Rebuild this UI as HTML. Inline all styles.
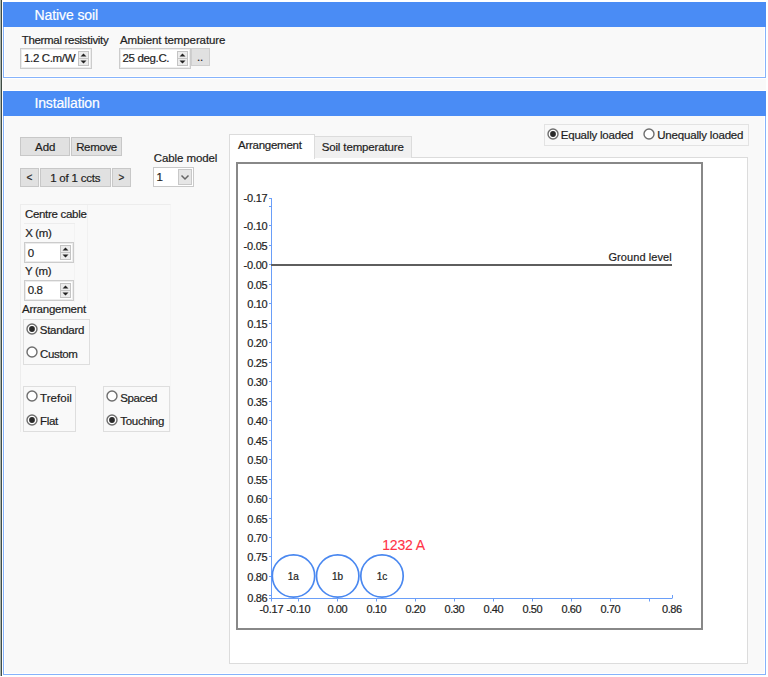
<!DOCTYPE html>
<html><head><meta charset="utf-8"><style>
html,body{margin:0;padding:0;}
body{width:768px;height:677px;position:relative;overflow:hidden;background:#ffffff;font-family:"Liberation Sans",sans-serif;}
body>div,body>svg{position:absolute;}
.t{white-space:nowrap;line-height:1;-webkit-text-stroke:0.2px currentColor;}
</style></head><body>
<div style="left:0px;top:0px;width:1px;height:676px;background:#a9b4ad"></div>
<div style="left:1px;top:0px;width:1px;height:676px;background:#3f4b45"></div>
<div style="left:3px;top:2px;width:763px;height:25px;background:#4a8cf5"></div>
<div style="left:3px;top:27px;width:763px;height:51px;background:#f9f9f9;border:1px solid #86b3fb;border-top:0;box-shadow:inset 1px 0 0 #fff,inset -1px 0 0 #fff,inset 0 -1px 0 #fff;box-sizing:border-box"></div>
<div style="left:3px;top:79px;width:763px;height:11px;background:#f9f9f9"></div>
<div class="t" style="left:34.60px;top:8.00px;font-size:14px;letter-spacing:-0.107px;color:#ffffff;">Native soil</div>
<div style="left:3px;top:91px;width:763px;height:25px;background:#4a8cf5"></div>
<div style="left:3px;top:116px;width:763px;height:559px;background:#f9f9f9;border:1px solid #86b3fb;border-top:0;box-shadow:inset 1px 0 0 #fff,inset -1px 0 0 #fff,inset 0 -1px 0 #fff;box-sizing:border-box"></div>
<div class="t" style="left:34.40px;top:96.00px;font-size:14px;letter-spacing:-0.140px;color:#ffffff;">Installation</div>
<div class="t" style="left:21.70px;top:35.00px;font-size:11.5px;letter-spacing:-0.311px;color:#1e1e1e;">Thermal resistivity</div>
<div style="left:20px;top:48px;width:72px;height:21px;background:#fff;border:1px solid #cccccc;box-shadow:inset 0 0 0 1px #ececec;box-sizing:border-box"></div>
<div style="left:78px;top:51px;width:11px;height:15px;background:#ececec;border:1px solid #c4c4c4;box-sizing:border-box"></div>
<div style="left:78px;top:58px;width:11px;height:1px;background:#c4c4c4"></div>
<svg style="left:78px;top:51px" width="11" height="15"><path d="M2.5 5.5L5.5 2.5L8.5 5.5Z M2.5 9.5L5.5 12.5L8.5 9.5Z" fill="#222"/></svg>
<div class="t" style="left:24.00px;top:53.00px;font-size:11.5px;letter-spacing:-0.350px;color:#1e1e1e;">1.2 C.m/W</div>
<div class="t" style="left:120.00px;top:35.00px;font-size:11.5px;letter-spacing:-0.111px;color:#1e1e1e;">Ambient temperature</div>
<div style="left:119px;top:48px;width:72px;height:21px;background:#fff;border:1px solid #cccccc;box-shadow:inset 0 0 0 1px #ececec;box-sizing:border-box"></div>
<div style="left:177px;top:51px;width:11px;height:15px;background:#ececec;border:1px solid #c4c4c4;box-sizing:border-box"></div>
<div style="left:177px;top:58px;width:11px;height:1px;background:#c4c4c4"></div>
<svg style="left:177px;top:51px" width="11" height="15"><path d="M2.5 5.5L5.5 2.5L8.5 5.5Z M2.5 9.5L5.5 12.5L8.5 9.5Z" fill="#222"/></svg>
<div class="t" style="left:122.50px;top:53.00px;font-size:11.5px;letter-spacing:-0.350px;color:#1e1e1e;">25 deg.C.</div>
<div style="left:191px;top:48px;width:19px;height:18px;background:#e1e1e1;border:1px solid #cfcfcf;box-sizing:border-box"></div>
<div class="t" style="left:196.90px;top:52.00px;font-size:11.5px;letter-spacing:0.000px;color:#1e1e1e;">..</div>
<div style="left:20px;top:137px;width:50px;height:19px;background:#e1e1e1;border:1px solid #c8c8c8;box-sizing:border-box"></div>
<div class="t" style="left:35.05px;top:142.00px;font-size:11.5px;letter-spacing:-0.083px;color:#1e1e1e;">Add</div>
<div style="left:71px;top:137px;width:51px;height:19px;background:#e1e1e1;border:1px solid #c8c8c8;box-sizing:border-box"></div>
<div class="t" style="left:76.16px;top:142.00px;font-size:11.5px;letter-spacing:-0.350px;color:#1e1e1e;">Remove</div>
<div style="left:20px;top:168px;width:19px;height:19px;background:#e1e1e1;border:1px solid #c8c8c8;box-sizing:border-box"></div>
<div class="t" style="left:26.50px;top:173.00px;font-size:10px;letter-spacing:0.000px;color:#1e1e1e;">&lt;</div>
<div style="left:40px;top:168px;width:71px;height:19px;background:#e1e1e1;border:1px solid #c8c8c8;box-sizing:border-box"></div>
<div class="t" style="left:50.20px;top:173.00px;font-size:11.5px;letter-spacing:-0.206px;color:#1e1e1e;">1 of 1 ccts</div>
<div style="left:112px;top:168px;width:19px;height:19px;background:#e1e1e1;border:1px solid #c8c8c8;box-sizing:border-box"></div>
<div class="t" style="left:118.50px;top:173.00px;font-size:10px;letter-spacing:0.000px;color:#1e1e1e;">&gt;</div>
<div class="t" style="left:153.80px;top:153.00px;font-size:11.5px;letter-spacing:-0.101px;color:#1e1e1e;">Cable model</div>
<div style="left:153px;top:167px;width:41px;height:20px;background:#fff;border:1px solid #c9c9c9;box-sizing:border-box"></div>
<div style="left:178px;top:169px;width:14px;height:16px;background:#e6e6e6;border:1px solid #c8c8c8;box-sizing:border-box"></div>
<svg style="left:178px;top:169px" width="14" height="16"><path d="M3.5 6.5L7 10L10.5 6.5" fill="none" stroke="#666" stroke-width="1.5"/></svg>
<div class="t" style="left:156.50px;top:172.00px;font-size:11.5px;letter-spacing:0.000px;color:#1e1e1e;">1</div>
<div style="left:20px;top:204px;width:151px;height:228px;border:1px solid #ededed;border-right-color:#f5f5f5;border-bottom:0;box-sizing:border-box"></div>
<div class="t" style="left:24.90px;top:209.00px;font-size:11.5px;letter-spacing:-0.301px;color:#1e1e1e;">Centre cable</div>
<div style="left:24px;top:223px;width:51px;height:1px;background:#ededed"></div>
<div style="left:87px;top:205px;width:1px;height:97px;background:#f1f1f1"></div>
<div style="left:74px;top:224px;width:1px;height:78px;background:#f3f3f3"></div>
<div class="t" style="left:25.20px;top:228.00px;font-size:11.5px;letter-spacing:-0.350px;color:#1e1e1e;">X (m)</div>
<div style="left:24px;top:242px;width:50px;height:21px;background:#fff;border:1px solid #cccccc;box-shadow:inset 0 0 0 1px #ececec;box-sizing:border-box"></div>
<div style="left:60px;top:245px;width:11px;height:15px;background:#ececec;border:1px solid #c4c4c4;box-sizing:border-box"></div>
<div style="left:60px;top:252px;width:11px;height:1px;background:#c4c4c4"></div>
<svg style="left:60px;top:245px" width="11" height="15"><path d="M2.5 5.5L5.5 2.5L8.5 5.5Z M2.5 9.5L5.5 12.5L8.5 9.5Z" fill="#222"/></svg>
<div class="t" style="left:27.70px;top:248.00px;font-size:11.5px;letter-spacing:0.000px;color:#1e1e1e;">0</div>
<div class="t" style="left:25.00px;top:266.00px;font-size:11.5px;letter-spacing:-0.350px;color:#1e1e1e;">Y (m)</div>
<div style="left:24px;top:280px;width:50px;height:21px;background:#fff;border:1px solid #cccccc;box-shadow:inset 0 0 0 1px #ececec;box-sizing:border-box"></div>
<div style="left:60px;top:283px;width:11px;height:15px;background:#ececec;border:1px solid #c4c4c4;box-sizing:border-box"></div>
<div style="left:60px;top:290px;width:11px;height:1px;background:#c4c4c4"></div>
<svg style="left:60px;top:283px" width="11" height="15"><path d="M2.5 5.5L5.5 2.5L8.5 5.5Z M2.5 9.5L5.5 12.5L8.5 9.5Z" fill="#222"/></svg>
<div class="t" style="left:27.70px;top:285.00px;font-size:11.5px;letter-spacing:-0.350px;color:#1e1e1e;">0.8</div>
<div class="t" style="left:22.00px;top:304.00px;font-size:11.5px;letter-spacing:-0.238px;color:#1e1e1e;">Arrangement</div>
<div style="left:23px;top:319px;width:67px;height:46px;border:1px solid #dedede;box-sizing:border-box"></div>
<svg style="left:24.90px;top:321.80px" width="14" height="14"><circle cx="7" cy="7" r="5" fill="#fff" stroke="#6e6e6e" stroke-width="1.4"/><circle cx="7" cy="7" r="2.9" fill="#2a2a2a"/></svg>
<div class="t" style="left:39.80px;top:325.00px;font-size:11.5px;letter-spacing:-0.297px;color:#1e1e1e;">Standard</div>
<svg style="left:24.90px;top:345.20px" width="14" height="14"><circle cx="7" cy="7" r="5" fill="#fff" stroke="#6e6e6e" stroke-width="1.4"/></svg>
<div class="t" style="left:40.00px;top:349.00px;font-size:11.5px;letter-spacing:-0.350px;color:#1e1e1e;">Custom</div>
<div style="left:23px;top:386px;width:53px;height:46px;border:1px solid #dedede;box-sizing:border-box"></div>
<svg style="left:24.65px;top:389.25px" width="14" height="14"><circle cx="7" cy="7" r="5" fill="#fff" stroke="#6e6e6e" stroke-width="1.4"/></svg>
<div class="t" style="left:40.00px;top:393.00px;font-size:11.5px;letter-spacing:0.047px;color:#1e1e1e;">Trefoil</div>
<svg style="left:24.65px;top:412.80px" width="14" height="14"><circle cx="7" cy="7" r="5" fill="#fff" stroke="#6e6e6e" stroke-width="1.4"/><circle cx="7" cy="7" r="2.9" fill="#2a2a2a"/></svg>
<div class="t" style="left:40.00px;top:416.00px;font-size:11.5px;letter-spacing:-0.350px;color:#1e1e1e;">Flat</div>
<div style="left:103px;top:386px;width:67px;height:46px;border:1px solid #dedede;box-sizing:border-box"></div>
<svg style="left:104.65px;top:389.25px" width="14" height="14"><circle cx="7" cy="7" r="5" fill="#fff" stroke="#6e6e6e" stroke-width="1.4"/></svg>
<div class="t" style="left:120.20px;top:393.00px;font-size:11.5px;letter-spacing:-0.350px;color:#1e1e1e;">Spaced</div>
<svg style="left:104.65px;top:412.80px" width="14" height="14"><circle cx="7" cy="7" r="5" fill="#fff" stroke="#6e6e6e" stroke-width="1.4"/><circle cx="7" cy="7" r="2.9" fill="#2a2a2a"/></svg>
<div class="t" style="left:120.20px;top:416.00px;font-size:11.5px;letter-spacing:-0.263px;color:#1e1e1e;">Touching</div>
<div style="left:544px;top:124px;width:205px;height:22px;border:1px solid #e3e3e3;box-sizing:border-box"></div>
<svg style="left:545.60px;top:126.80px" width="14" height="14"><circle cx="7" cy="7" r="5" fill="#fff" stroke="#6e6e6e" stroke-width="1.4"/><circle cx="7" cy="7" r="2.9" fill="#2a2a2a"/></svg>
<div class="t" style="left:560.80px;top:130.00px;font-size:11.5px;letter-spacing:-0.212px;color:#1e1e1e;">Equally loaded</div>
<svg style="left:641.50px;top:126.60px" width="14" height="14"><circle cx="7" cy="7" r="5" fill="#fff" stroke="#6e6e6e" stroke-width="1.4"/></svg>
<div class="t" style="left:657.20px;top:130.00px;font-size:11.5px;letter-spacing:-0.172px;color:#1e1e1e;">Unequally loaded</div>
<div style="left:229px;top:157px;width:519px;height:507px;background:#fff;border:1px solid #dcdcdc;box-sizing:border-box"></div>
<div style="left:314px;top:136px;width:98px;height:22px;background:#f0f0f0;border:1px solid #dcdcdc;border-bottom:0;box-sizing:border-box"></div>
<div style="left:229px;top:134px;width:86px;height:25px;background:#fff;border:1px solid #dcdcdc;border-bottom:0;box-sizing:border-box"></div>
<div class="t" style="left:238.00px;top:140.00px;font-size:11.5px;letter-spacing:-0.258px;color:#1e1e1e;">Arrangement</div>
<div class="t" style="left:321.70px;top:142.00px;font-size:11.5px;letter-spacing:-0.145px;color:#1e1e1e;">Soil temperature</div>
<div style="left:236px;top:162px;width:467px;height:468px;background:#fff;border:2px solid #888888;box-sizing:border-box"></div>
<div class="t" style="left:243.60px;top:221.00px;font-size:11px;letter-spacing:-0.239px;color:#222;">-0.10</div>
<div class="t" style="left:243.60px;top:241.00px;font-size:11px;letter-spacing:-0.239px;color:#222;">-0.05</div>
<div class="t" style="left:243.60px;top:260.00px;font-size:11px;letter-spacing:-0.239px;color:#222;">-0.00</div>
<div class="t" style="left:247.36px;top:280.00px;font-size:11px;letter-spacing:-0.350px;color:#222;">0.05</div>
<div class="t" style="left:247.36px;top:299.00px;font-size:11px;letter-spacing:-0.350px;color:#222;">0.10</div>
<div class="t" style="left:247.36px;top:319.00px;font-size:11px;letter-spacing:-0.350px;color:#222;">0.15</div>
<div class="t" style="left:247.36px;top:338.00px;font-size:11px;letter-spacing:-0.350px;color:#222;">0.20</div>
<div class="t" style="left:247.36px;top:358.00px;font-size:11px;letter-spacing:-0.350px;color:#222;">0.25</div>
<div class="t" style="left:247.36px;top:377.00px;font-size:11px;letter-spacing:-0.350px;color:#222;">0.30</div>
<div class="t" style="left:247.36px;top:397.00px;font-size:11px;letter-spacing:-0.350px;color:#222;">0.35</div>
<div class="t" style="left:247.36px;top:416.00px;font-size:11px;letter-spacing:-0.350px;color:#222;">0.40</div>
<div class="t" style="left:247.36px;top:436.00px;font-size:11px;letter-spacing:-0.350px;color:#222;">0.45</div>
<div class="t" style="left:247.36px;top:455.00px;font-size:11px;letter-spacing:-0.350px;color:#222;">0.50</div>
<div class="t" style="left:247.36px;top:475.00px;font-size:11px;letter-spacing:-0.350px;color:#222;">0.55</div>
<div class="t" style="left:247.36px;top:494.00px;font-size:11px;letter-spacing:-0.350px;color:#222;">0.60</div>
<div class="t" style="left:247.36px;top:514.00px;font-size:11px;letter-spacing:-0.350px;color:#222;">0.65</div>
<div class="t" style="left:247.36px;top:533.00px;font-size:11px;letter-spacing:-0.350px;color:#222;">0.70</div>
<div class="t" style="left:247.36px;top:552.00px;font-size:11px;letter-spacing:-0.350px;color:#222;">0.75</div>
<div class="t" style="left:247.36px;top:572.00px;font-size:11px;letter-spacing:-0.350px;color:#222;">0.80</div>
<div class="t" style="left:243.60px;top:193.00px;font-size:11px;letter-spacing:-0.239px;color:#222;">-0.17</div>
<div class="t" style="left:247.36px;top:593.00px;font-size:11px;letter-spacing:-0.350px;color:#222;">0.86</div>
<div class="t" style="left:286.50px;top:604.00px;font-size:11px;letter-spacing:-0.239px;color:#222;">-0.10</div>
<div class="t" style="left:327.38px;top:604.00px;font-size:11px;letter-spacing:-0.350px;color:#222;">0.00</div>
<div class="t" style="left:366.38px;top:604.00px;font-size:11px;letter-spacing:-0.350px;color:#222;">0.10</div>
<div class="t" style="left:405.38px;top:604.00px;font-size:11px;letter-spacing:-0.350px;color:#222;">0.20</div>
<div class="t" style="left:444.38px;top:604.00px;font-size:11px;letter-spacing:-0.350px;color:#222;">0.30</div>
<div class="t" style="left:483.38px;top:604.00px;font-size:11px;letter-spacing:-0.350px;color:#222;">0.40</div>
<div class="t" style="left:522.38px;top:604.00px;font-size:11px;letter-spacing:-0.350px;color:#222;">0.50</div>
<div class="t" style="left:561.38px;top:604.00px;font-size:11px;letter-spacing:-0.350px;color:#222;">0.60</div>
<div class="t" style="left:600.38px;top:604.00px;font-size:11px;letter-spacing:-0.350px;color:#222;">0.70</div>
<div class="t" style="left:259.40px;top:604.00px;font-size:11px;letter-spacing:-0.239px;color:#222;">-0.17</div>
<div class="t" style="left:661.88px;top:604.00px;font-size:11px;letter-spacing:-0.350px;color:#222;">0.86</div>
<div class="t" style="left:608.40px;top:252.00px;font-size:11px;letter-spacing:0.089px;color:#222;">Ground level</div>
<div class="t" style="left:287.72px;top:572.00px;font-size:10px;letter-spacing:0.000px;color:#222;">1a</div>
<div class="t" style="left:331.92px;top:572.00px;font-size:10px;letter-spacing:0.000px;color:#222;">1b</div>
<div class="t" style="left:376.72px;top:572.00px;font-size:10px;letter-spacing:0.000px;color:#222;">1c</div>
<div class="t" style="left:382.20px;top:538.00px;font-size:14px;letter-spacing:-0.147px;color:#ff3346;-webkit-text-stroke:0.1px currentColor;">1232 A</div>
<svg style="left:0;top:0" width="768" height="677"><line x1="271.5" y1="198" x2="271.5" y2="601.5" stroke="#6a9ef8" stroke-width="1"/><line x1="269" y1="598.5" x2="672.5" y2="598.5" stroke="#6a9ef8" stroke-width="1"/><line x1="269" y1="198.5" x2="272" y2="198.5" stroke="#6a9ef8" stroke-width="1"/><line x1="269" y1="206.5" x2="271.5" y2="206.5" stroke="#6a9ef8" stroke-width="1"/><line x1="269" y1="225.5" x2="271.5" y2="225.5" stroke="#6a9ef8" stroke-width="1"/><line x1="269" y1="245.5" x2="271.5" y2="245.5" stroke="#6a9ef8" stroke-width="1"/><line x1="269" y1="264.5" x2="271.5" y2="264.5" stroke="#6a9ef8" stroke-width="1"/><line x1="269" y1="284.5" x2="271.5" y2="284.5" stroke="#6a9ef8" stroke-width="1"/><line x1="269" y1="303.5" x2="271.5" y2="303.5" stroke="#6a9ef8" stroke-width="1"/><line x1="269" y1="323.5" x2="271.5" y2="323.5" stroke="#6a9ef8" stroke-width="1"/><line x1="269" y1="342.5" x2="271.5" y2="342.5" stroke="#6a9ef8" stroke-width="1"/><line x1="269" y1="362.5" x2="271.5" y2="362.5" stroke="#6a9ef8" stroke-width="1"/><line x1="269" y1="381.5" x2="271.5" y2="381.5" stroke="#6a9ef8" stroke-width="1"/><line x1="269" y1="401.5" x2="271.5" y2="401.5" stroke="#6a9ef8" stroke-width="1"/><line x1="269" y1="420.5" x2="271.5" y2="420.5" stroke="#6a9ef8" stroke-width="1"/><line x1="269" y1="440.5" x2="271.5" y2="440.5" stroke="#6a9ef8" stroke-width="1"/><line x1="269" y1="459.5" x2="271.5" y2="459.5" stroke="#6a9ef8" stroke-width="1"/><line x1="269" y1="479.5" x2="271.5" y2="479.5" stroke="#6a9ef8" stroke-width="1"/><line x1="269" y1="498.5" x2="271.5" y2="498.5" stroke="#6a9ef8" stroke-width="1"/><line x1="269" y1="518.5" x2="271.5" y2="518.5" stroke="#6a9ef8" stroke-width="1"/><line x1="269" y1="537.5" x2="271.5" y2="537.5" stroke="#6a9ef8" stroke-width="1"/><line x1="269" y1="556.5" x2="271.5" y2="556.5" stroke="#6a9ef8" stroke-width="1"/><line x1="269" y1="576.5" x2="271.5" y2="576.5" stroke="#6a9ef8" stroke-width="1"/><line x1="269" y1="595.5" x2="271.5" y2="595.5" stroke="#6a9ef8" stroke-width="1"/><line x1="298.5" y1="598" x2="298.5" y2="601.5" stroke="#6a9ef8" stroke-width="1"/><line x1="337.5" y1="598" x2="337.5" y2="601.5" stroke="#6a9ef8" stroke-width="1"/><line x1="376.5" y1="598" x2="376.5" y2="601.5" stroke="#6a9ef8" stroke-width="1"/><line x1="415.5" y1="598" x2="415.5" y2="601.5" stroke="#6a9ef8" stroke-width="1"/><line x1="454.5" y1="598" x2="454.5" y2="601.5" stroke="#6a9ef8" stroke-width="1"/><line x1="493.5" y1="598" x2="493.5" y2="601.5" stroke="#6a9ef8" stroke-width="1"/><line x1="532.5" y1="598" x2="532.5" y2="601.5" stroke="#6a9ef8" stroke-width="1"/><line x1="571.5" y1="598" x2="571.5" y2="601.5" stroke="#6a9ef8" stroke-width="1"/><line x1="610.5" y1="598" x2="610.5" y2="601.5" stroke="#6a9ef8" stroke-width="1"/><line x1="649.5" y1="598" x2="649.5" y2="601.5" stroke="#6a9ef8" stroke-width="1"/><line x1="672.5" y1="595" x2="672.5" y2="598" stroke="#6a9ef8" stroke-width="1"/><line x1="271" y1="265" x2="672" y2="265" stroke="#5e5e5e" stroke-width="2"/><circle cx="293.5" cy="576" r="21.2" fill="none" stroke="#4a88f0" stroke-width="1.7"/><circle cx="337.7" cy="576" r="21.2" fill="none" stroke="#4a88f0" stroke-width="1.7"/><circle cx="382.0" cy="576" r="21.2" fill="none" stroke="#4a88f0" stroke-width="1.7"/></svg>
</body></html>
